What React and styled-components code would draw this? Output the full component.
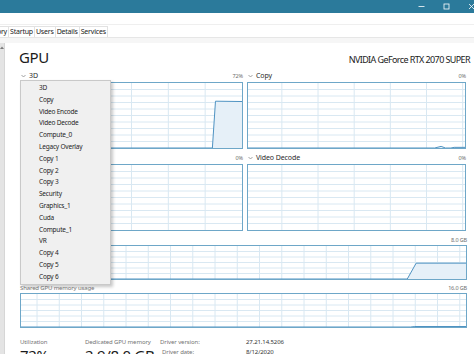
import React from 'react'
import styled, { createGlobalStyle } from 'styled-components'

const GlobalStyle = createGlobalStyle`
  html, body { margin: 0; padding: 0; background: #fff; }
  body { font-family: "Noto Sans", "Open Sans", sans-serif; }
`

const Window = styled.div`
  width: 474px;
  height: 354px;
  overflow: hidden;
  display: flex;
  flex-direction: column;
  background: #fff;
  color: #1b1b1b;
`

const TitleBar = styled.div`
  height: 13px;
  flex: none;
  background: #2b7a9b;
  display: flex;
  justify-content: flex-end;
`

const Controls = styled.div`
  display: flex;
  margin-right: -10px;
`

const WinButton = styled.div`
  width: 25px;
  height: 13px;
  display: flex;
  align-items: center;
  justify-content: center;
`

const MenuBand = styled.div`
  height: 11px;
  flex: none;
  border-bottom: 1px solid #efefef;
`

const TabRow = styled.div`
  height: 12px;
  flex: none;
  display: flex;
  align-items: flex-end;
  border-bottom: 1px solid #e6e6e6;
`

const ClippedTab = styled.div`
  width: 8px;
  display: flex;
  justify-content: flex-end;
  overflow: hidden;
`

const Tab = styled.div`
  height: 11px;
  box-sizing: border-box;
  flex: none;
  padding: 0 1px;
  border: 1px solid #e2e2e2;
  border-bottom: none;
  margin-right: -1px;
  font-size: 7px;
  line-height: 10px;
  letter-spacing: -0.2px;
  color: #222;
  white-space: nowrap;
`

const Band = styled.div`
  height: 5px;
  flex: none;
  background: #f6f6f6;
`

const Body = styled.div`
  flex: 1;
  display: flex;
  min-height: 0;
`

const Scrollbar = styled.div`
  width: 5px;
  flex: none;
  background: #e4e4e4;
  border-right: 1px solid #d6d6d6;
  box-sizing: border-box;
  padding-top: 3px;
  display: flex;
  justify-content: center;
  align-items: flex-start;
`

const Main = styled.div`
  flex: 1;
  padding: 0 7px 0 15px;
  display: flex;
  flex-direction: column;
`

const Header = styled.div`
  padding-top: 5px;
  display: flex;
  justify-content: space-between;
  align-items: baseline;
`

const Title = styled.div`
  font-size: 15px;
  line-height: 18px;
  letter-spacing: -0.4px;
  margin-left: -1px;
`

const Adapter = styled.div`
  font-size: 9px;
  letter-spacing: -0.6px;
  color: #1b1b1b;
  margin-right: -3px;
`

const EngineGrid = styled.div`
  margin-top: 4px;
  display: grid;
  grid-template-columns: 223px 219px;
  column-gap: 4px;
  row-gap: 3px;
`

const Cell = styled.div`
  display: flex;
  flex-direction: column;
  position: relative;
`

const CellHead = styled.div`
  height: 11px;
  margin-bottom: 1px;
  display: flex;
  align-items: center;
  justify-content: space-between;
  white-space: nowrap;
`

const EngineName = styled.div`
  display: flex;
  align-items: center;
  gap: 3px;
  font-size: 7px;
  letter-spacing: -0.1px;
  color: #2a2a2a;
  padding-left: 1px;
`

const Small = styled.div`
  font-size: 5.5px;
  letter-spacing: -0.15px;
  color: #6e6e6e;
`

const MemHead = styled.div`
  height: 11px;
  margin-top: ${p => p.$gap}px;
  margin-bottom: 1px;
  display: flex;
  align-items: center;
  justify-content: space-between;
`

const MemLabel = styled.div`
  font-size: 6px;
  letter-spacing: -0.15px;
  color: #7a7a7a;
`

const ChartBox = styled.div`
  height: ${p => p.$h}px;
  flex: none;
  border: 1px solid #6ea7c8;
  box-sizing: border-box;
  background: #fff;
  svg { display: block; width: 100%; height: 100%; }
`

const Stats = styled.div`
  margin-top: 9px;
  display: flex;
`

const StatBlock = styled.div`
  width: ${p => p.$w}px;
  flex: none;
  display: flex;
  flex-direction: column;
`

const StatLabel = styled.div`
  height: 10px;
  line-height: 10px;
  font-size: 6px;
  letter-spacing: -0.1px;
  color: #747474;
  white-space: nowrap;
`

const StatValue = styled.div`
  margin-top: -1px;
  font-size: 15px;
  line-height: 18px;
  letter-spacing: -0.3px;
  color: #1b1b1b;
  white-space: nowrap;
`

const InfoTable = styled.div`
  display: grid;
  grid-template-columns: 86px auto;
  grid-auto-rows: 10px;
  align-items: center;
  font-size: 6px;
  letter-spacing: -0.1px;
  white-space: nowrap;
`

const InfoKey = styled.div`
  color: #747474;
  padding-left: ${p => (p.$indent ? 2 : 0)}px;
`

const InfoVal = styled.div`
  color: #333;
`

const Menu = styled.div`
  position: absolute;
  top: 10px;
  left: 0;
  z-index: 5;
  width: 91px;
  box-sizing: border-box;
  padding: 1px 0;
  background: #f0f0f0;
  border: 1px solid #c9c9c9;
  box-shadow: 2px 2px 3px rgba(0, 0, 0, 0.22);
`

const MenuItem = styled.div`
  height: 11.8px;
  line-height: 11.8px;
  padding-left: 18px;
  font-size: 6.5px;
  letter-spacing: -0.2px;
  color: #1e1e1e;
  white-space: nowrap;
`

const engines = [
  '3D', 'Copy', 'Video Encode', 'Video Decode', 'Compute_0', 'Legacy Overlay',
  'Copy 1', 'Copy 2', 'Copy 3', 'Security', 'Graphics_1', 'Cuda', 'Compute_1',
  'VR', 'Copy 4', 'Copy 5', 'Copy 6',
]

function Chevron() {
  return (
    <svg width="5" height="4" viewBox="0 0 5 4">
      <path d="M0.5 1 L2.5 3 L4.5 1" fill="none" stroke="#8a8a8a" strokeWidth="0.8" />
    </svg>
  )
}

function Chart({ h, cols, rows, offset = 0, points }) {
  const vlines = []
  for (let i = -1; i <= cols + 1; i++) {
    const x = ((i + offset) * 100) / cols
    if (x > 0.5 && x < 99.5) vlines.push(x)
  }
  const hlines = []
  for (let i = 1; i < rows; i++) hlines.push((i * 100) / rows)
  const line = points ? points.map(([x, v]) => `${x},${100 - v}`).join(' ') : ''
  const area = points
    ? `${points[0][0]},100 ${line} ${points[points.length - 1][0]},100`
    : ''
  return (
    <ChartBox $h={h}>
      <svg viewBox="0 0 100 100" preserveAspectRatio="none">
        {hlines.map(y => (
          <line key={'h' + y} x1="0" x2="100" y1={y} y2={y} stroke="#d9e8f2" strokeWidth="1" vectorEffect="non-scaling-stroke" />
        ))}
        {vlines.map(x => (
          <line key={'v' + x} x1={x} x2={x} y1="0" y2="100" stroke="#d9e8f2" strokeWidth="1" vectorEffect="non-scaling-stroke" />
        ))}
        {points && <polygon points={area} fill="#e6f0f8" />}
        {points && (
          <polyline points={line} fill="none" stroke="#4f93c2" strokeWidth="1" vectorEffect="non-scaling-stroke" />
        )}
      </svg>
    </ChartBox>
  )
}

function Engine({ name, value, points, offset, children }) {
  return (
    <Cell>
      <CellHead>
        <EngineName><Chevron />{name}</EngineName>
        <Small>{value}</Small>
      </CellHead>
      <Chart h={67} cols={6} rows={10} offset={offset} points={points} />
      {children}
    </Cell>
  )
}

export default function App() {
  return (
    <Window>
      <GlobalStyle />
      <TitleBar>
        <Controls>
          <WinButton>
            <svg width="7" height="7" viewBox="0 0 7 7"><path d="M0.5 3.5 H6.5" stroke="#fff" strokeWidth="0.8" /></svg>
          </WinButton>
          <WinButton>
            <svg width="7" height="7" viewBox="0 0 7 7"><rect x="1" y="1" width="5" height="5" fill="none" stroke="#fff" strokeWidth="0.8" /></svg>
          </WinButton>
          <WinButton>
            <svg width="7" height="7" viewBox="0 0 7 7"><path d="M1 1 L6 6 M6 1 L1 6" stroke="#fff" strokeWidth="0.8" /></svg>
          </WinButton>
        </Controls>
      </TitleBar>
      <MenuBand />
      <TabRow>
        <ClippedTab><Tab>App history</Tab></ClippedTab>
        <Tab>Startup</Tab>
        <Tab>Users</Tab>
        <Tab>Details</Tab>
        <Tab>Services</Tab>
      </TabRow>
      <Band />
      <Body>
        <Scrollbar>
          <svg width="4" height="3" viewBox="0 0 4 3"><path d="M0 3 L2 0.5 L4 3 Z" fill="#7a7a7a" /></svg>
        </Scrollbar>
        <Main>
          <Header>
            <Title>GPU</Title>
            <Adapter>NVIDIA GeForce RTX 2070 SUPER</Adapter>
          </Header>
          <EngineGrid>
            <Engine name="3D" value="72%" points={[[0, 0], [86.6, 0], [88, 72], [100, 71.5]]}>
              <Menu>
                {engines.map(e => <MenuItem key={e}>{e}</MenuItem>)}
              </Menu>
            </Engine>
            <Engine name="Copy" value="0%" offset={-0.064} points={[[0, 0], [86, 0], [89, 2.5], [91, 0], [93.5, 0], [95, 1], [100, 1]]} />
            <Engine name="Video Encode" value="0%" />
            <Engine name="Video Decode" value="0%" offset={-0.064} />
          </EngineGrid>
          <MemHead $gap={5}>
            <MemLabel>Dedicated GPU memory usage</MemLabel>
            <Small>8.0 GB</Small>
          </MemHead>
          <Chart h={35} cols={20} rows={6} offset={0.72} points={[[0, 0], [86.8, 0], [88.8, 48], [100, 48]]} />
          <MemHead $gap={4}>
            <MemLabel>Shared GPU memory usage</MemLabel>
            <Small>16.0 GB</Small>
          </MemHead>
          <Chart h={35} cols={20} rows={6} offset={0.72} points={[[0, 0], [87.5, 0], [88.5, 1.5], [100, 1.5]]} />
          <Stats>
            <StatBlock $w={65}>
              <StatLabel>Utilization</StatLabel>
              <StatValue>72%</StatValue>
            </StatBlock>
            <StatBlock $w={75}>
              <StatLabel>Dedicated GPU memory</StatLabel>
              <StatValue>2.9/8.0 GB</StatValue>
            </StatBlock>
            <InfoTable>
              <InfoKey>Driver version:</InfoKey>
              <InfoVal>27.21.14.5206</InfoVal>
              <InfoKey $indent>Driver date:</InfoKey>
              <InfoVal>8/12/2020</InfoVal>
            </InfoTable>
          </Stats>
        </Main>
      </Body>
    </Window>
  )
}
